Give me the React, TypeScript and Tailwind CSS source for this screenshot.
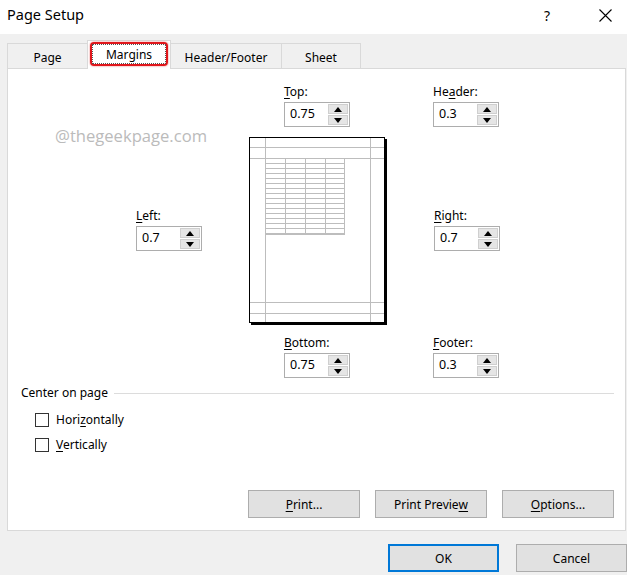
import React from "react";

const font = { fontFamily: '"Noto Sans", "Open Sans", Arial, sans-serif' };

function Spin({ value }: { value: string }) {
  return (
    <div className="flex h-[25px] w-[66px] border border-[#adadad] bg-white">
      <div className="flex flex-1 items-center pl-[5px] text-[12.5px] text-black">{value}</div>
      <div className="flex w-[21px] flex-col gap-px py-px pr-px">
        <div className="flex flex-1 items-center justify-center border border-[#cfcfcf] bg-[#e5e5e5]">
          <svg width="8" height="5" viewBox="0 0 8 5"><polygon points="0,5 8,5 4,0" fill="#000" /></svg>
        </div>
        <div className="flex flex-1 items-center justify-center border border-[#cfcfcf] bg-[#e5e5e5]">
          <svg width="8" height="5" viewBox="0 0 8 5"><polygon points="0,0 8,0 4,5" fill="#000" /></svg>
        </div>
      </div>
    </div>
  );
}

function Field({ pre, u, post, value }: { pre: string; u: string; post: string; value: string }) {
  return (
    <div className="flex w-[66px] flex-col">
      <div className="h-[18px] text-[12px] leading-[18px] text-black whitespace-nowrap">
        {pre}
        <span className="underline underline-offset-2">{u}</span>
        {post}
      </div>
      <div className="mt-px">
        <Spin value={value} />
      </div>
    </div>
  );
}

function Preview() {
  const rows: number[] = [];
  for (let y = 26; y <= 96; y += 5) rows.push(y);
  const g = "#bdbdbd";
  return (
    <svg width="139" height="189" viewBox="0 0 139 189" className="block">
      <rect x="2" y="2" width="136" height="186" fill="#000" />
      <rect x="0.5" y="0.5" width="135" height="185" fill="#fff" stroke="#000" strokeWidth="1" />
      <line x1="16.5" y1="1" x2="16.5" y2="185" stroke={g} />
      <line x1="121.5" y1="1" x2="121.5" y2="185" stroke={g} />
      <line x1="1" y1="10.5" x2="135" y2="10.5" stroke={g} />
      <line x1="1" y1="21.5" x2="135" y2="21.5" stroke={g} />
      <line x1="1" y1="165.5" x2="135" y2="165.5" stroke={g} />
      <line x1="1" y1="176.5" x2="135" y2="176.5" stroke={g} />
      {rows.map((y) => (
        <line key={y} x1="16" y1={y + 0.5} x2="95" y2={y + 0.5} stroke={g} />
      ))}
      <line x1="16" y1="97.5" x2="95" y2="97.5" stroke={g} />
      {[36, 56, 76, 95].map((x) => (
        <line key={x} x1={x + 0.5} y1="21" x2={x + 0.5} y2="98" stroke={g} />
      ))}
    </svg>
  );
}

function Check({ pre, u, post }: { pre: string; u: string; post: string }) {
  return (
    <div className="flex h-[20px] items-center">
      <div className="h-[14px] w-[14px] border border-[#333] bg-white" />
      <div className="ml-[7px] text-[12px] text-black">
        {pre}
        <span className="underline underline-offset-2">{u}</span>
        {post}
      </div>
    </div>
  );
}

function Btn({ children }: { children: React.ReactNode }) {
  return (
    <div className="flex h-[28px] w-[112px] items-center justify-center border border-[#adadad] bg-[#e1e1e1] pt-[2px] text-[12px] text-black">
      {children}
    </div>
  );
}

export default function App() {
  return (
    <div className="h-[575px] w-[627px] overflow-hidden bg-[#f0f0f0]" style={font}>
      {/* title bar */}
      <div className="flex h-[34px] items-center bg-white pb-[4px] pr-[15px]">
        <div className="pl-[7px] text-[14.5px] text-black">Page Setup</div>
        <div className="flex-1" />
        <div className="w-[8px] text-center text-[14px] text-black">?</div>
        <svg className="ml-[48px]" width="13" height="13" viewBox="0 0 13 13">
          <path d="M0.5 0.5 L12.5 12.5 M12.5 0.5 L0.5 12.5" stroke="#000" strokeWidth="1.1" />
        </svg>
      </div>

      {/* tabs */}
      <div className="flex h-[34px] items-end pl-[7px] text-[12px] text-black">
        <div className="flex h-[25px] w-[80px] items-center justify-center border-l border-t border-[#d9d9d9] pt-[3px]">Page</div>
        <div className="relative z-10 -mb-px flex h-[29px] w-[84px] border-l border-r border-t border-[#d9d9d9] bg-white px-[2px] pt-px pb-[3px]">
          <div className="flex flex-1 items-center justify-center rounded-[4px] border-2 border-[#e0161b] shadow-[0_0_2px_rgba(220,0,0,0.6)]">
            <div className="flex h-full w-full items-center justify-center border border-dotted border-[#555] pt-[2px]">Margins</div>
          </div>
        </div>
        <div className="flex h-[25px] w-[111px] items-center justify-center border-r border-t border-[#d9d9d9] pt-[3px]">Header/Footer</div>
        <div className="flex h-[25px] w-[79px] items-center justify-center border-r border-t border-[#d9d9d9] pt-[3px]">Sheet</div>
      </div>

      {/* panel */}
      <div className="relative ml-[7px] flex h-[463px] w-[619px] flex-col border border-[#d9d9d9] bg-white">
        <div className="absolute left-[47px] top-[55px] text-[16.6px] text-[#bbbbbb]" style={{ fontFamily: '"Open Sans", "Noto Sans", sans-serif' }}>
          @thegeekpage.com
        </div>

        <div className="flex pl-[276px] pt-[14px]">
          <Field pre="" u="T" post="op:" value="0.75" />
          <div className="ml-[83px]">
            <Field pre="He" u="a" post="der:" value="0.3" />
          </div>
        </div>

        <div className="mt-[10px] flex items-start pl-[128px]">
          <div className="mt-[70px]">
            <Field pre="" u="L" post="eft:" value="0.7" />
          </div>
          <div className="ml-[47px]">
            <Preview />
          </div>
          <div className="ml-[46px] mt-[70px]">
            <Field pre="" u="R" post="ight:" value="0.7" />
          </div>
        </div>

        <div className="mt-[8px] flex pl-[276px]">
          <Field pre="" u="B" post="ottom:" value="0.75" />
          <div className="ml-[83px]">
            <Field pre="" u="F" post="ooter:" value="0.3" />
          </div>
        </div>

        <div className="mt-[7px] flex h-[16px] items-center pl-[13px] pr-[11px]">
          <div className="text-[12px] text-black">Center on page</div>
          <div className="ml-[6px] h-px flex-1 bg-[#dcdcdc]" />
        </div>

        <div className="mt-[9px] flex flex-col gap-[5px] pl-[27px]">
          <Check pre="Hori" u="z" post="ontally" />
          <Check pre="" u="V" post="ertically" />
        </div>

        <div className="mt-auto flex justify-end gap-[15px] pb-[12px] pr-[11px]">
          <Btn>
            <span className="underline underline-offset-2">P</span>rint...
          </Btn>
          <Btn>
            Print Previe<span className="underline underline-offset-2">w</span>
          </Btn>
          <Btn>
            <span className="underline underline-offset-2">O</span>ptions...
          </Btn>
        </div>
      </div>

      {/* bottom buttons */}
      <div className="mt-[13px] flex justify-end gap-[17px]">
        <div className="flex h-[28px] w-[111px] items-center justify-center border-2 border-[#0078d7] bg-[#e1e1e1] pt-[2px] text-[12px] text-black">OK</div>
        <div className="flex h-[28px] w-[111px] items-center justify-center border border-[#adadad] bg-[#e1e1e1] pt-[2px] text-[12px] text-black">Cancel</div>
      </div>
    </div>
  );
}
